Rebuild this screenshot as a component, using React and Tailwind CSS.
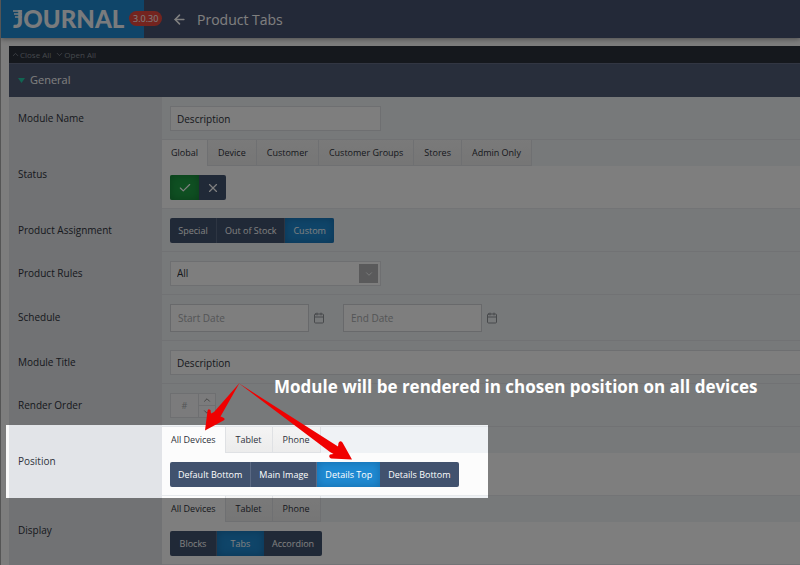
import React from 'react';
import { ArrowLeft, Calendar, Check, ChevronDown, ChevronUp, X } from 'lucide-react';

const Row = ({ label, htmlFor, children }) => (
  <div className="flex border-b border-[#e2e5e9]">
    <div className="w-[153px] shrink-0 bg-[#e2e4e8] pl-[9px] flex items-center text-[10px]">
      <label htmlFor={htmlFor}>{label}</label>
    </div>
    <div className="flex-1 min-w-0 bg-[#eff2f5] pt-[9px] pb-2 pl-2 flex items-center">{children}</div>
  </div>
);

const TabRow = ({ label, tabs, children, overlay }) => (
  <div className="relative flex">
    <div className="w-[153px] shrink-0 bg-[#e2e4e8] pl-[9px] flex items-center text-[10px]">{label}</div>
    <div className="flex-1 min-w-0 bg-[#fcfcfc] border-b border-[#e6e9ec]">
      <div className="flex h-[26px] bg-[#eff2f5] text-[9px]" role="tablist">
        {tabs.map((tab, i) => (
          <button
            key={tab}
            role="tab"
            aria-selected={i === 0}
            className={
              i === 0
                ? 'bg-[#fcfcfc] border-b border-[#fcfcfc] px-[9px]'
                : 'bg-linear-to-b from-[#f4f4f4] to-[#ececec] border-l border-b border-[#dfe1e4] last:border-r px-[10px]'
            }
          >
            {tab}
          </button>
        ))}
      </div>
      <div className="pt-[9px] pb-2 pl-2 flex">{children}</div>
    </div>
    {overlay}
  </div>
);

const ButtonGroup = ({ options, active }) => (
  <div className="flex h-[25px] rounded-xs overflow-hidden text-[9px] text-white">
    {options.map(option => (
      <button
        key={option}
        className={
          option === active
            ? 'bg-[#1f8ad2] shadow-[inset_0_0_8px_#156aa8] min-w-[47px] px-2'
            : 'bg-[#41526e] border-r border-[#5b6a84] last:border-r-0 min-w-[47px] px-2'
        }
      >
        {option}
      </button>
    ))}
  </div>
);

const DateField = ({ id, placeholder }) => (
  <div className="flex items-center">
    <input
      id={id}
      aria-label={placeholder}
      placeholder={placeholder}
      className="w-[139px] h-7 bg-[#fcfcfc] border border-[#d0d3d7] px-[7px] text-[10px] placeholder:text-[#a9abae]"
    />
    <Calendar className="ml-1 text-[#8e9297]" size={12} strokeWidth={2} />
  </div>
);

const Logo = () => (
  <div className="relative font-['Lato',sans-serif] font-black text-[24px] leading-[30px] text-[#f3f7fa]">
    JOURNAL
    <svg className="absolute left-0 top-[6px] w-[9px] h-[8px]" viewBox="0 0 9 8">
      <path d="M0 1h9M1 4h8M2 7h7" stroke="currentColor" strokeWidth="1.5" />
    </svg>
  </div>
);

// Spotlight on the row, everything around it is dimmed by the shadow
const Spotlight = () => (
  <div className="pointer-events-none absolute z-10 -left-[3px] -top-[2px] w-[482px] h-[73px] shadow-[0_0_0_2000px_rgba(0,0,0,0.5)]">
    <p className="absolute left-[268px] -top-[50px] whitespace-nowrap text-[17px] leading-6 font-bold text-white">
      Module will be rendered in chosen position on all devices
    </p>
    <svg className="absolute left-[194px] -top-[45px] w-[160px] h-[84px]" viewBox="200 380 160 84" fill="#f00000">
      <path d="M239.500 383L220.500 416.500L223 417.500Q226 419 223.500 420.500L205 430.500L207.500 411Q208 408 210.500 410L211 413.500L214 412Z" />
      <path d="M238.500 383L338 446.500L338.500 443Q340 440 342.500 442.500L352 459.500L331 458.500Q328 457 330 454.500L333.500 454L330 452Z" />
    </svg>
  </div>
);

const App = () => {
  return (
    <div className="relative min-h-screen overflow-hidden border-l border-[#555] bg-[#fafafa] font-['Open_Sans',sans-serif] text-[#2e323b]">
      <header className="flex h-[38px] bg-[#465270] text-white shadow-[0_1px_5px_rgba(0,0,0,0.4)]">
        <div className="relative w-[143px] shrink-0 bg-[#1f8ad2] flex items-center pl-3">
          <Logo />
          <span className="absolute left-[128px] top-[11px] h-[15px] rounded-full bg-[#e8483f] px-1 text-[9px] leading-[15px]">3.0.30</span>
        </div>
        <a href="#" aria-label="Back" className="ml-7 flex items-center">
          <ArrowLeft size={15} strokeWidth={2.5} />
        </a>
        <h1 className="ml-[10px] self-center text-[14px]">Product Tabs</h1>
      </header>

      <main className="mt-2 ml-2">
        <div className="flex h-[17px] items-center gap-1 bg-[#2a303b] pl-[2px] text-[8px] text-[#8b9099]">
          <button className="flex items-center"><ChevronUp size={9} />Close All</button>
          <button className="flex items-center"><ChevronDown size={9} />Open All</button>
        </div>
        <button className="flex w-full h-[34px] items-center bg-[#515c76] border-t border-[#646d84] pl-[9px] text-[11px] text-white">
          <svg className="w-[7px] h-[5px]" viewBox="0 0 7 5"><path d="M0 0h7L3.500 5z" fill="#22c9a4" /></svg>
          <span className="ml-[5px]">General</span>
        </button>

        <Row label="Module Name" htmlFor="name">
          <input id="name" defaultValue="Description" className="w-[211px] h-[25px] bg-[#fcfcfc] border border-[#dcdfe3] px-[6px] text-[10px]" />
        </Row>

        <TabRow label="Status" tabs={['Global', 'Device', 'Customer', 'Customer Groups', 'Stores', 'Admin Only']}>
          <div className="flex h-[25px] rounded-xs overflow-hidden text-white">
            <button aria-label="Enabled" className="w-[29px] bg-[#1fa045] shadow-[inset_0_0_8px_#147a33] flex items-center justify-center">
              <Check size={14} strokeWidth={2} />
            </button>
            <button aria-label="Disabled" className="w-[27px] bg-[#41526e] flex items-center justify-center">
              <X size={14} strokeWidth={2} />
            </button>
          </div>
        </TabRow>

        <Row label="Product Assignment">
          <ButtonGroup options={['Special', 'Out of Stock', 'Custom']} active="Custom" />
        </Row>

        <Row label="Product Rules" htmlFor="rules">
          <div className="relative">
            <select id="rules" className="block appearance-none w-[211px] h-[25px] bg-[#fcfcfc] border border-[#dcdfe3] px-[6px] text-[10px]">
              <option>All</option>
            </select>
            <span className="pointer-events-none absolute right-[3px] top-[3px] w-[19px] h-[19px] bg-[#b4b5b7] text-white flex items-center justify-center">
              <ChevronDown size={10} />
            </span>
          </div>
        </Row>

        <Row label="Schedule" htmlFor="start">
          <div className="flex gap-[18px]">
            <DateField id="start" placeholder="Start Date" />
            <DateField id="end" placeholder="End Date" />
          </div>
        </Row>

        <Row label="Module Title" htmlFor="title">
          <input id="title" defaultValue="Description" className="flex-1 h-[25px] bg-[#fcfcfc] border border-r-0 border-[#dcdfe3] px-[6px] text-[10px]" />
        </Row>

        <Row label="Render Order" htmlFor="order">
          <div className="flex h-[25px] border border-[#dcdfe3] bg-[#f6f7f8]">
            <input id="order" placeholder="#" className="w-[27px] text-center text-[9px] placeholder:text-[#a9abae]" />
            <div className="flex flex-col w-[17px] border-l border-[#dcdfe3] text-[#777]">
              <button aria-label="Increase" className="flex-1 flex items-center justify-center"><ChevronUp size={10} /></button>
              <button aria-label="Decrease" className="flex-1 flex items-center justify-center border-t border-[#dcdfe3]"><ChevronDown size={10} /></button>
            </div>
          </div>
        </Row>

        <TabRow label="Position" tabs={['All Devices', 'Tablet', 'Phone']} overlay={<Spotlight />}>
          <ButtonGroup options={['Default Bottom', 'Main Image', 'Details Top', 'Details Bottom']} active="Details Top" />
        </TabRow>

        <TabRow label="Display" tabs={['All Devices', 'Tablet', 'Phone']}>
          <ButtonGroup options={['Blocks', 'Tabs', 'Accordion']} active="Tabs" />
        </TabRow>
      </main>
    </div>
  );
};

export default App;
